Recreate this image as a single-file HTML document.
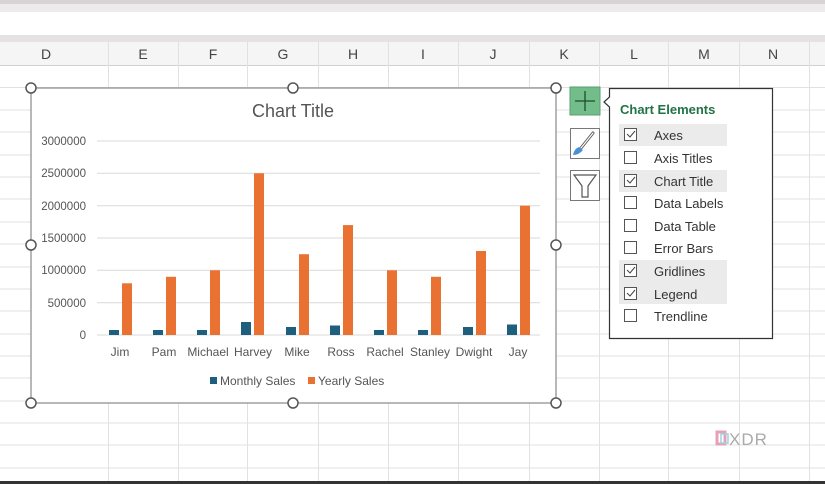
<!DOCTYPE html>
<html><head><meta charset="utf-8"><style>
body{margin:0;width:825px;height:484px;overflow:hidden;background:#fff;font-family:"Liberation Sans",sans-serif;position:relative}
.abs{position:absolute}
</style></head><body>
<div class="abs" style="left:0;top:0;width:825px;height:4px;background:#d8d4d6"></div>
<div class="abs" style="left:0;top:4px;width:825px;height:8px;background:#efeaec"></div>
<div class="abs" style="left:0;top:35px;width:825px;height:7px;background:#e6e2e4"></div>
<div class="abs" style="left:0;top:42px;width:825px;height:23px;background:#f5f5f5;border-bottom:1px solid #d0d0d0"></div>
<svg class="abs" style="left:0;top:0" width="825" height="484">
<g stroke="#e1e1e1" stroke-width="1">
<line x1="108.5" y1="42" x2="108.5" y2="484"/><line x1="178.5" y1="42" x2="178.5" y2="484"/><line x1="247.5" y1="42" x2="247.5" y2="484"/><line x1="318.5" y1="42" x2="318.5" y2="484"/><line x1="388.5" y1="42" x2="388.5" y2="484"/><line x1="458.5" y1="42" x2="458.5" y2="484"/><line x1="529.5" y1="42" x2="529.5" y2="484"/><line x1="599.5" y1="42" x2="599.5" y2="484"/><line x1="668.5" y1="42" x2="668.5" y2="484"/><line x1="739.5" y1="42" x2="739.5" y2="484"/><line x1="809.5" y1="42" x2="809.5" y2="484"/>
<line x1="0" y1="87.5" x2="825" y2="87.5"/><line x1="0" y1="110" x2="825" y2="110"/><line x1="0" y1="132" x2="825" y2="132"/><line x1="0" y1="155" x2="825" y2="155"/><line x1="0" y1="177" x2="825" y2="177"/><line x1="0" y1="199" x2="825" y2="199"/><line x1="0" y1="222" x2="825" y2="222"/><line x1="0" y1="244" x2="825" y2="244"/><line x1="0" y1="267" x2="825" y2="267"/><line x1="0" y1="289" x2="825" y2="289"/><line x1="0" y1="311" x2="825" y2="311"/><line x1="0" y1="334" x2="825" y2="334"/><line x1="0" y1="356" x2="825" y2="356"/><line x1="0" y1="378" x2="825" y2="378"/><line x1="0" y1="401" x2="825" y2="401"/><line x1="0" y1="423" x2="825" y2="423"/><line x1="0" y1="445" x2="825" y2="445"/><line x1="0" y1="468" x2="825" y2="468"/>
</g>
<g font-size="14" fill="#444" text-anchor="middle">
<text x="46" y="59">D</text><text x="143" y="59">E</text><text x="213" y="59">F</text><text x="283" y="59">G</text><text x="353" y="59">H</text><text x="423" y="59">I</text><text x="493" y="59">J</text><text x="564" y="59">K</text><text x="634" y="59">L</text><text x="704" y="59">M</text><text x="773" y="59">N</text>
</g>
<rect x="31" y="88" width="525" height="315" fill="#fff" stroke="#888" stroke-width="1.2"/>
<text x="293" y="117" font-size="18" fill="#555" text-anchor="middle">Chart Title</text>
<g stroke="#d9d9d9"><line x1="97" y1="141" x2="540" y2="141"/><line x1="97" y1="173.3" x2="540" y2="173.3"/><line x1="97" y1="205.7" x2="540" y2="205.7"/><line x1="97" y1="238" x2="540" y2="238"/><line x1="97" y1="270.3" x2="540" y2="270.3"/><line x1="97" y1="302.7" x2="540" y2="302.7"/><line x1="97" y1="335" x2="540" y2="335"/></g>
<g font-size="11.5" fill="#555" text-anchor="end">
<text x="86" y="145">3000000</text><text x="86" y="177">2500000</text><text x="86" y="210">2000000</text><text x="86" y="242">1500000</text><text x="86" y="274">1000000</text><text x="86" y="307">500000</text><text x="86" y="339">0</text>
</g>
<g fill="#1e5f7e">
<rect x="109" y="330" width="10" height="5"/><rect x="153" y="330" width="10" height="5"/><rect x="197" y="330" width="10" height="5"/><rect x="241" y="322" width="10" height="13"/><rect x="286" y="327" width="10" height="8"/><rect x="330" y="325.5" width="10" height="9.5"/><rect x="374" y="330" width="10" height="5"/><rect x="418" y="330" width="10" height="5"/><rect x="463" y="327" width="10" height="8"/><rect x="507" y="324.5" width="10" height="10.5"/>
</g>
<g fill="#e97132">
<rect x="122" y="283.3" width="10" height="51.7"/><rect x="166" y="276.8" width="10" height="58.2"/><rect x="210" y="270.3" width="10" height="64.7"/><rect x="254" y="173.3" width="10" height="161.7"/><rect x="299" y="254.2" width="10" height="80.8"/><rect x="343" y="225.1" width="10" height="109.9"/><rect x="387" y="270.3" width="10" height="64.7"/><rect x="431" y="276.8" width="10" height="58.2"/><rect x="476" y="251" width="10" height="84"/><rect x="520" y="205.7" width="10" height="129.3"/>
</g>
<g font-size="12" fill="#555" text-anchor="middle">
<text x="120" y="356">Jim</text><text x="164" y="356">Pam</text><text x="208" y="356">Michael</text><text x="253" y="356">Harvey</text><text x="297" y="356">Mike</text><text x="341" y="356">Ross</text><text x="385" y="356">Rachel</text><text x="430" y="356">Stanley</text><text x="474" y="356">Dwight</text><text x="518" y="356">Jay</text>
</g>
<rect x="210" y="377" width="7" height="7" fill="#1e5f7e"/><text x="220" y="385" font-size="12" fill="#555">Monthly Sales</text>
<rect x="308" y="377" width="7" height="7" fill="#e97132"/><text x="318" y="385" font-size="12" fill="#555">Yearly Sales</text>
<g fill="#fff" stroke="#555" stroke-width="1.5">
<circle cx="31" cy="88" r="5"/><circle cx="293" cy="88" r="5"/><circle cx="556" cy="88" r="5"/><circle cx="31" cy="245" r="5"/><circle cx="556" cy="245" r="5"/><circle cx="31" cy="403" r="5"/><circle cx="293" cy="403" r="5"/><circle cx="556" cy="403" r="5"/>
</g>
<rect x="570" y="87" width="30" height="28" fill="#72bd8a" stroke="#5a9e70"/>
<path d="M585 91V111M575 101H595" stroke="#1f4d2e" stroke-width="1.3"/>
<rect x="570.5" y="128.5" width="29" height="30" fill="#fff" stroke="#777"/>
<path d="M593 133L581 148" stroke="#555" stroke-width="3" stroke-linecap="round"/><path d="M593 133L581 148" stroke="#fff" stroke-width="1.2" stroke-linecap="round"/>
<path d="M579 147Q574 149 573 155Q579 155 583 150Z" fill="#4a8fd6"/>
<rect x="570.5" y="170.5" width="29" height="30" fill="#fff" stroke="#777"/>
<path d="M574 175H596L588 186V197H582V186Z" fill="none" stroke="#555" stroke-width="1.2"/>
<path d="M609.5 88.5H772.5V338.5H609.5V107L604 102L609.5 97Z" fill="#fff" stroke="#333" stroke-width="1.2"/>
<text x="620" y="114" font-size="13" font-weight="bold" fill="#217346">Chart Elements</text>
<g fill="#ebebeb"><rect x="619" y="124" width="108" height="22"/><rect x="619" y="170" width="108" height="22"/><rect x="619" y="260" width="108" height="44"/></g>
<g fill="#fff" stroke="#555" stroke-width="1"><rect x="624.5" y="128.5" width="12" height="12"/><rect x="624.5" y="151.5" width="12" height="12"/><rect x="624.5" y="174.5" width="12" height="12"/><rect x="624.5" y="196.5" width="12" height="12"/><rect x="624.5" y="219.5" width="12" height="12"/><rect x="624.5" y="241.5" width="12" height="12"/><rect x="624.5" y="264.5" width="12" height="12"/><rect x="624.5" y="287.5" width="12" height="12"/><rect x="624.5" y="309.5" width="12" height="12"/></g>
<g fill="none" stroke="#444" stroke-width="1"><path d="M627 134L630 137L635 131"/><path d="M627 180L630 183L635 177"/><path d="M627 270L630 273L635 267"/><path d="M627 293L630 296L635 290"/></g>
<g font-size="13" fill="#333"><text x="654" y="140">Axes</text><text x="654" y="163">Axis Titles</text><text x="654" y="186">Chart Title</text><text x="654" y="208">Data Labels</text><text x="654" y="231">Data Table</text><text x="654" y="253">Error Bars</text><text x="654" y="276">Gridlines</text><text x="654" y="299">Legend</text><text x="654" y="321">Trendline</text></g>
<rect x="717" y="432" width="8" height="12" fill="none" stroke="#e8a0b4" stroke-width="3"/>
<rect x="721" y="434" width="7" height="9" fill="none" stroke="#9cd3e0" stroke-width="1.5"/>
<text x="729" y="445" font-size="17" fill="#aaa" letter-spacing="1">XDR</text>
<rect x="0" y="481" width="825" height="3" fill="#333"/>
</svg>
</body></html>
